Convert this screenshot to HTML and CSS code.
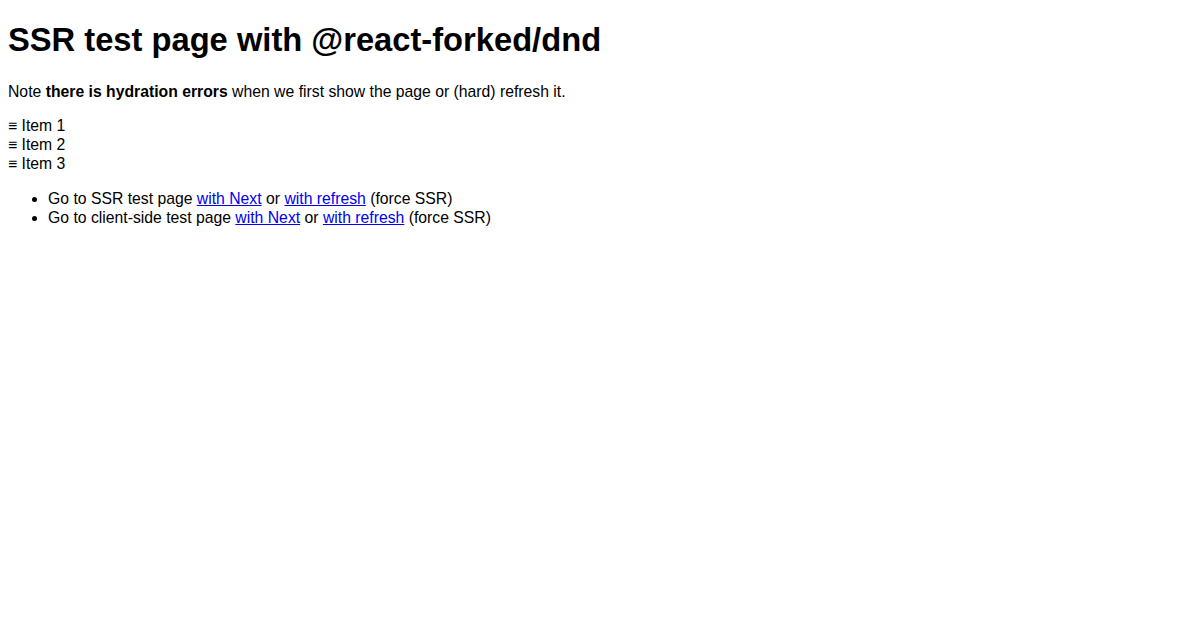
FILE: index.html
```html
<!DOCTYPE html>
<html>
<head>
<meta charset="utf-8">
<title>SSR test page</title>
<link rel="stylesheet" href="styles.css">
</head>
<body>
<h1 class="title">SSR test page with @react-forked/dnd</h1>
<p class="note">Note <b>there is hydration errors</b> when we first show the page or (hard) refresh it.</p>
<div class="items">
<div class="item">≡ Item 1</div>
<div class="item">≡ Item 2</div>
<div class="item">≡ Item 3</div>
</div>
<ul class="links">
<li>Go to SSR test page <a href="#">with Next</a> or <a href="#">with refresh</a> (force SSR)</li>
<li>Go to client-side test page <a href="#">with Next</a> or <a href="#">with refresh</a> (force SSR)</li>
</ul>
</body>
</html>
```
FILE: styles.css
```css
html, body {
  background: #fff;
}
body {
  margin: 0;
  padding: 8px;
  font-family: "Liberation Sans", Arial, sans-serif;
  font-size: 15.75px;
  line-height: 18.4px;
  color: #000;
}
.title {
  font-size: 32.7px;
  line-height: 38px;
  font-weight: bold;
  margin: 13px 0 23.6px;
}
.note {
  margin: 0 0 15.4px;
}
.items {
  margin: 0 0 15.8px;
  line-height: 19px;
}
.links {
  margin: 0;
  padding-left: 40px;
  line-height: 19px;
}
.links a {
  color: #0000ee;
}
```
